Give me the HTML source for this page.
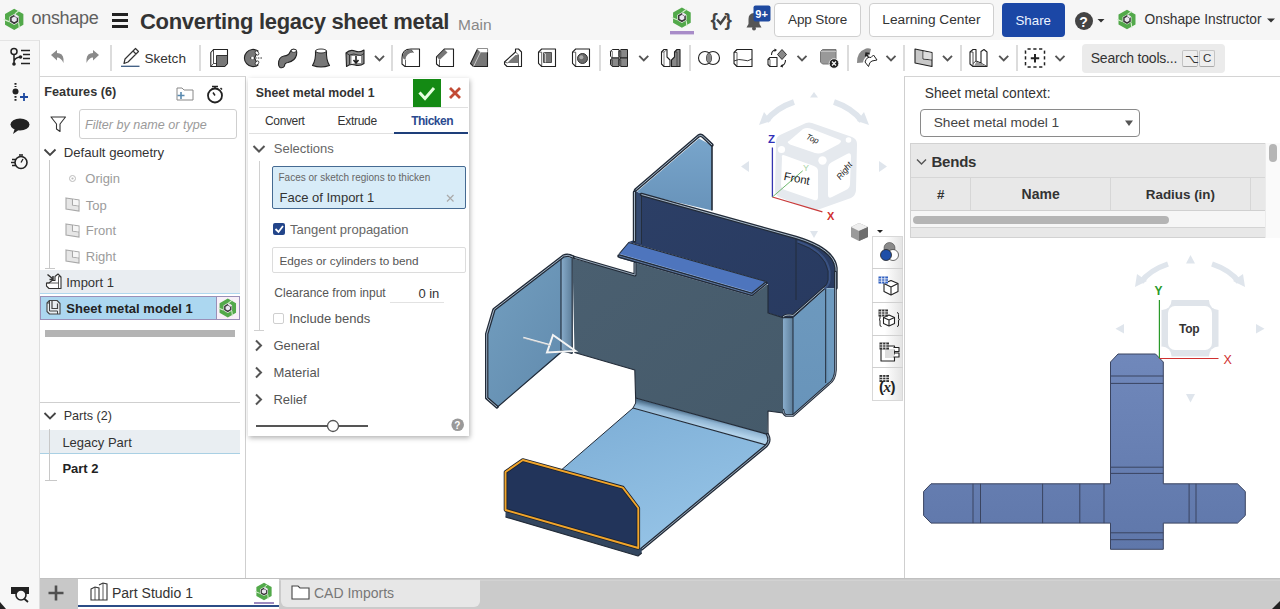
<!DOCTYPE html>
<html><head><meta charset="utf-8">
<style>
*{box-sizing:border-box;margin:0;padding:0}
html,body{width:1280px;height:609px;overflow:hidden;background:#fff;font-family:"Liberation Sans",sans-serif;color:#333}
.a{position:absolute}
svg{position:absolute;overflow:visible}
.t{position:absolute;white-space:nowrap;line-height:1}
</style></head><body>
<div class="a" style="left:0px;top:0px;width:1280px;height:40px;background:#f6f6f6"></div>
<div class="a" style="left:40px;top:40px;width:1240px;height:37px;background:#fff"></div>
<div class="a" style="left:0px;top:40px;width:40px;height:569px;background:#f7f7f7;border-right:1px solid #dedede;border-top:1px solid #e4e4e4"></div>
<div class="a" style="left:40px;top:76px;width:206px;height:502px;background:#fff;border-top:1px solid #d4d4d4;border-right:1px solid #cfcfcf"></div>
<div class="a" style="left:904px;top:76px;width:376px;height:502px;background:#fff;border-top:1px solid #d4d4d4;border-left:1px solid #cfcfcf"></div>
<div class="a" style="left:40px;top:578px;width:1240px;height:31px;background:#cbcbcb;border-top:1px solid #c0c0c0"></div>
<div class="a" style="left:40px;top:580px;width:1240px;height:1px;background:#d2d2d2"></div>
<div class="t" style="left:31.5px;top:9.00px;font-size:18px;font-weight:normal;color:#606060;font-style:normal;letter-spacing:-0.3px;">onshape</div>
<div class="a" style="left:112px;top:13px;width:16px;height:2.5px;background:#222"></div>
<div class="a" style="left:112px;top:19px;width:16px;height:2.5px;background:#222"></div>
<div class="a" style="left:112px;top:25px;width:16px;height:2.5px;background:#222"></div>
<div class="t" style="left:140px;top:11.00px;font-size:22px;font-weight:bold;color:#333;font-style:normal;letter-spacing:-0.3px;">Converting legacy sheet metal</div>
<div class="t" style="left:458px;top:16.52px;font-size:15.5px;font-weight:normal;color:#888;font-style:normal;letter-spacing:0px;">Main</div>
<div class="a" style="left:774px;top:3px;width:87px;height:34px;background:#fff;border:1px solid #cfcfcf;border-radius:4px"></div>
<div class="t" style="left:788px;top:13.42px;font-size:13.5px;font-weight:normal;color:#333;font-style:normal;letter-spacing:-0.1px;">App Store</div>
<div class="a" style="left:869px;top:3px;width:125px;height:34px;background:#fff;border:1px solid #cfcfcf;border-radius:4px"></div>
<div class="t" style="left:882.3px;top:13.25px;font-size:13.7px;font-weight:normal;color:#333;font-style:normal;letter-spacing:0px;">Learning Center</div>
<div class="a" style="left:1002px;top:3px;width:63px;height:34px;background:#1b47a6;border-radius:4px"></div>
<div class="t" style="left:1015.5px;top:13.59px;font-size:13.3px;font-weight:normal;color:#eef3ff;font-style:normal;letter-spacing:0px;">Share</div>
<div class="t" style="left:1144.6px;top:13.21px;font-size:13.75px;font-weight:normal;color:#333;font-style:normal;letter-spacing:0px;">Onshape Instructor</div>
<div class="t" style="left:144.4px;top:51.54px;font-size:13.6px;font-weight:normal;color:#333;font-style:normal;letter-spacing:0px;">Sketch</div>
<div class="a" style="left:110px;top:45px;width:2px;height:26px;background:#dcdcdc"></div>
<div class="a" style="left:199px;top:45px;width:2px;height:26px;background:#dcdcdc"></div>
<div class="a" style="left:391px;top:45px;width:2px;height:26px;background:#dcdcdc"></div>
<div class="a" style="left:599px;top:45px;width:2px;height:26px;background:#dcdcdc"></div>
<div class="a" style="left:689px;top:45px;width:2px;height:26px;background:#dcdcdc"></div>
<div class="a" style="left:847px;top:45px;width:2px;height:26px;background:#dcdcdc"></div>
<div class="a" style="left:903px;top:45px;width:2px;height:26px;background:#dcdcdc"></div>
<div class="a" style="left:960px;top:45px;width:2px;height:26px;background:#dcdcdc"></div>
<div class="a" style="left:1016px;top:45px;width:2px;height:26px;background:#dcdcdc"></div>
<div class="a" style="left:1082px;top:44px;width:143px;height:29px;background:#ebebeb;border-radius:4px"></div>
<div class="t" style="left:1090.7px;top:51.10px;font-size:14px;font-weight:normal;color:#333;font-style:normal;letter-spacing:-0.2px;">Search tools...</div>
<div class="a" style="left:1181.5px;top:50px;width:16px;height:17px;background:#eee;border:1px solid #c4c4c4;border-bottom:1.5px solid #a8a8a8;border-radius:2px"></div>
<div class="a" style="left:1199px;top:50px;width:16px;height:17px;background:#eee;border:1px solid #c4c4c4;border-bottom:1.5px solid #a8a8a8;border-radius:2px"></div>
<div class="t" style="left:1184.5px;top:52.80px;font-size:12px;font-weight:normal;color:#333;font-style:normal;letter-spacing:0px;">&#8997;</div>
<div class="t" style="left:1203px;top:53.23px;font-size:11.5px;font-weight:normal;color:#333;font-style:normal;letter-spacing:0px;">C</div>
<div class="t" style="left:44.3px;top:86.30px;font-size:12.7px;font-weight:bold;color:#333;font-style:normal;letter-spacing:0px;">Features (6)</div>
<div class="a" style="left:79px;top:109px;width:158px;height:30px;background:#fff;border:1px solid #cfcfcf;border-radius:3px"></div>
<div class="t" style="left:85px;top:118.59px;font-size:12.6px;font-weight:normal;color:#9a9a9a;font-style:italic;letter-spacing:0px;">Filter by name or type</div>
<div class="t" style="left:63.7px;top:145.68px;font-size:13.2px;font-weight:normal;color:#333;font-style:normal;letter-spacing:0px;">Default geometry</div>
<div class="t" style="left:85.3px;top:171.85px;font-size:13px;font-weight:normal;color:#9c9c9c;font-style:normal;letter-spacing:0px;">Origin</div>
<div class="t" style="left:85.8px;top:198.55px;font-size:13px;font-weight:normal;color:#9c9c9c;font-style:normal;letter-spacing:0px;">Top</div>
<div class="t" style="left:85.8px;top:224.25px;font-size:13px;font-weight:normal;color:#9c9c9c;font-style:normal;letter-spacing:0px;">Front</div>
<div class="t" style="left:85.8px;top:250.25px;font-size:13px;font-weight:normal;color:#9c9c9c;font-style:normal;letter-spacing:0px;">Right</div>
<div class="a" style="left:49px;top:160px;width:1px;height:109px;background:#c8c8c8"></div>
<div class="a" style="left:45px;top:268px;width:10px;height:1px;background:#c8c8c8"></div>
<div class="a" style="left:40px;top:270px;width:200px;height:24px;background:#e9edf1;border-bottom:1.5px solid #b0d8ee"></div>
<div class="t" style="left:66.2px;top:276.25px;font-size:13px;font-weight:normal;color:#333;font-style:normal;letter-spacing:0px;">Import 1</div>
<div class="a" style="left:40px;top:296px;width:200px;height:24px;background:#acd7f0;border:1.5px solid #9a90b8"></div>
<div class="a" style="left:216px;top:296px;width:24px;height:24px;background:#f8f0f8;border:1.5px solid #9a90b8"></div>
<div class="t" style="left:66.2px;top:301.65px;font-size:13px;font-weight:bold;color:#222;font-style:normal;letter-spacing:0.05px;">Sheet metal model 1</div>
<div class="a" style="left:45px;top:330px;width:190px;height:7px;background:#b4b4b4"></div>
<div class="a" style="left:40px;top:402px;width:200px;height:1px;background:#cfcfcf"></div>
<div class="t" style="left:63.7px;top:410.29px;font-size:12.6px;font-weight:normal;color:#333;font-style:normal;letter-spacing:0px;">Parts (2)</div>
<div class="a" style="left:40px;top:430px;width:200px;height:24px;background:#e9eef2;border-bottom:1px solid #a9d0e4"></div>
<div class="t" style="left:62.4px;top:435.95px;font-size:13px;font-weight:normal;color:#333;font-style:normal;letter-spacing:0px;">Legacy Part</div>
<div class="t" style="left:62.4px;top:461.65px;font-size:13px;font-weight:bold;color:#222;font-style:normal;letter-spacing:0px;">Part 2</div>
<div class="a" style="left:49px;top:429px;width:1px;height:52px;background:#c8c8c8"></div>
<div class="a" style="left:45px;top:480px;width:12px;height:1px;background:#c8c8c8"></div>
<div class="t" style="left:924.7px;top:87.07px;font-size:13.8px;font-weight:normal;color:#333;font-style:normal;letter-spacing:0px;">Sheet metal context:</div>
<div class="a" style="left:920px;top:109px;width:220px;height:28px;background:#fff;border:1px solid #8a8a8a;border-radius:4px"></div>
<div class="t" style="left:933.7px;top:116.26px;font-size:13.7px;font-weight:normal;color:#444;font-style:normal;letter-spacing:0px;">Sheet metal model 1</div>
<div class="a" style="left:910px;top:143px;width:356px;height:95px;background:#e8e8e8;border:1px solid #d2d2d2"></div>
<div class="t" style="left:931.4px;top:154.25px;font-size:15px;font-weight:bold;color:#333;font-style:normal;letter-spacing:-0.2px;">Bends</div>
<div class="a" style="left:911px;top:177px;width:354px;height:1px;background:#d6d6d6"></div>
<div class="a" style="left:911px;top:210px;width:354px;height:1px;background:#d0d0d0"></div>
<div class="a" style="left:970px;top:178px;width:1px;height:32px;background:#d6d6d6"></div>
<div class="a" style="left:1110px;top:178px;width:1px;height:32px;background:#d6d6d6"></div>
<div class="a" style="left:1250px;top:178px;width:1px;height:32px;background:#d6d6d6"></div>
<div class="t" style="left:937px;top:187.81px;font-size:13.4px;font-weight:bold;color:#333;font-style:normal;letter-spacing:0px;">#</div>
<div class="t" style="left:1021.6px;top:187.30px;font-size:14px;font-weight:bold;color:#333;font-style:normal;letter-spacing:0px;">Name</div>
<div class="t" style="left:1145.8px;top:187.81px;font-size:13.4px;font-weight:bold;color:#333;font-style:normal;letter-spacing:0px;">Radius (in)</div>
<div class="a" style="left:911px;top:211px;width:354px;height:16px;background:#f6f6f6"></div>
<div class="a" style="left:913px;top:215.5px;width:256px;height:8.5px;background:#b5b5b5;border-radius:4px"></div>
<div class="a" style="left:911px;top:227px;width:354px;height:1px;background:#d4d4d4"></div>
<div class="a" style="left:1265px;top:143px;width:15px;height:95px;background:#fafafa;border-left:1px solid #ececec"></div>
<div class="a" style="left:1269px;top:144px;width:8px;height:18px;background:#b5b5b5;border-radius:4px"></div>
<div class="a" style="left:40px;top:579px;width:38px;height:30px;background:#c8c8c8"></div>
<div class="a" style="left:78px;top:579px;width:201px;height:30px;background:#fff"></div>
<div class="a" style="left:78px;top:605px;width:201px;height:2px;background:#2b4c86"></div>
<div class="a" style="left:254px;top:602px;width:20px;height:2px;background:#9c8ac0"></div>
<div class="t" style="left:112px;top:586.10px;font-size:14px;font-weight:normal;color:#333;font-style:normal;letter-spacing:0px;">Part Studio 1</div>
<div class="a" style="left:281px;top:580px;width:199px;height:27px;background:#e7e7e7;border-radius:0 0 6px 6px"></div>
<div class="t" style="left:314px;top:586.10px;font-size:14px;font-weight:normal;color:#777;font-style:normal;letter-spacing:0px;">CAD Imports</div>
<div class="a" style="left:248px;top:78px;width:221px;height:358px;background:#fff;box-shadow:1px 2px 5px rgba(0,0,0,0.3)"></div>
<div class="t" style="left:255.8px;top:87.34px;font-size:12.3px;font-weight:bold;color:#333;font-style:normal;letter-spacing:0px;">Sheet metal model 1</div>
<div class="a" style="left:413px;top:79px;width:28px;height:28px;background:#148a14"></div>
<div class="a" style="left:249px;top:107px;width:219px;height:1px;background:#e0e0e0"></div>
<div class="t" style="left:265px;top:114.80px;font-size:12px;font-weight:normal;color:#333;font-style:normal;letter-spacing:-0.35px;">Convert</div>
<div class="t" style="left:337.5px;top:114.80px;font-size:12px;font-weight:normal;color:#333;font-style:normal;letter-spacing:-0.3px;">Extrude</div>
<div class="t" style="left:411.2px;top:114.80px;font-size:12px;font-weight:bold;color:#2b4a8f;font-style:normal;letter-spacing:-0.5px;">Thicken</div>
<div class="a" style="left:249px;top:133px;width:219px;height:1px;background:#e0e0e0"></div>
<div class="a" style="left:394px;top:132px;width:74px;height:2px;background:#1e3f7a"></div>
<div class="t" style="left:273.8px;top:141.55px;font-size:13px;font-weight:normal;color:#666;font-style:normal;letter-spacing:0px;">Selections</div>
<div class="a" style="left:259px;top:161px;width:1px;height:169px;background:#d0d0d0"></div>
<div class="a" style="left:254px;top:330px;width:10px;height:1px;background:#d0d0d0"></div>
<div class="a" style="left:272px;top:166px;width:194px;height:43px;background:#d8ecf8;border:1px solid #456a92;border-radius:2px"></div>
<div class="t" style="left:278.5px;top:172.80px;font-size:10px;font-weight:normal;color:#666;font-style:normal;letter-spacing:0px;">Faces or sketch regions to thicken</div>
<div class="t" style="left:279.5px;top:191.35px;font-size:13px;font-weight:normal;color:#333;font-style:normal;letter-spacing:0px;">Face of Import 1</div>
<div class="a" style="left:273px;top:223px;width:12px;height:12px;background:#23458a;border-radius:2px"></div>
<div class="t" style="left:290px;top:222.85px;font-size:13px;font-weight:normal;color:#666;font-style:normal;letter-spacing:0px;">Tangent propagation</div>
<div class="a" style="left:272px;top:247px;width:194px;height:26px;background:#fff;border:1px solid #dcdcdc;border-radius:2px"></div>
<div class="t" style="left:279.5px;top:255.41px;font-size:11.75px;font-weight:normal;color:#555;font-style:normal;letter-spacing:0px;">Edges or cylinders to bend</div>
<div class="t" style="left:274.3px;top:287.30px;font-size:12px;font-weight:normal;color:#555;font-style:normal;letter-spacing:0px;">Clearance from input</div>
<div class="t" style="left:418.4px;top:286.95px;font-size:13px;font-weight:normal;color:#333;font-style:normal;letter-spacing:0px;">0 in</div>
<div class="a" style="left:390px;top:302px;width:54px;height:1px;background:#e2e2e2"></div>
<div class="a" style="left:273px;top:313px;width:11px;height:11px;background:#fff;border:1px solid #cfcfcf;border-radius:2px"></div>
<div class="t" style="left:289.2px;top:312.15px;font-size:13px;font-weight:normal;color:#555;font-style:normal;letter-spacing:0px;">Include bends</div>
<div class="t" style="left:273.4px;top:339.25px;font-size:13px;font-weight:normal;color:#555;font-style:normal;letter-spacing:0px;">General</div>
<div class="t" style="left:273.4px;top:366.35px;font-size:13px;font-weight:normal;color:#555;font-style:normal;letter-spacing:0px;">Material</div>
<div class="t" style="left:273.4px;top:393.15px;font-size:13px;font-weight:normal;color:#555;font-style:normal;letter-spacing:0px;">Relief</div>
<div class="a" style="left:256px;top:425px;width:112px;height:1.5px;background:#555"></div>
<svg style="left:0px;top:0px;" width="1280" height="609" viewBox="0 0 1280 609">
<defs>
<linearGradient id="gLF" x1="0" y1="0" x2="1" y2="1"><stop offset="0" stop-color="#739fc0"/><stop offset="1" stop-color="#6089ac"/></linearGradient>
<linearGradient id="gBend" x1="0" y1="0" x2="1" y2="0"><stop offset="0" stop-color="#88accb"/><stop offset="1" stop-color="#5d7e9a"/></linearGradient>
<linearGradient id="gFloor" x1="0" y1="0" x2="0.5" y2="1"><stop offset="0" stop-color="#7cadd5"/><stop offset="1" stop-color="#95c3e6"/></linearGradient>
<linearGradient id="gRW" x1="0" y1="0" x2="0" y2="1"><stop offset="0" stop-color="#6d99be"/><stop offset="1" stop-color="#6894ba"/></linearGradient>
<linearGradient id="gBF" x1="0" y1="0" x2="0" y2="1"><stop offset="0" stop-color="#78a5cb"/><stop offset="1" stop-color="#6893ba"/></linearGradient>
<linearGradient id="gMW" x1="0" y1="0" x2="1" y2="1"><stop offset="0" stop-color="#4a5f70"/><stop offset="1" stop-color="#455a6a"/></linearGradient>
<linearGradient id="gNavy" x1="0" y1="0" x2="1" y2="1"><stop offset="0" stop-color="#2c3f66"/><stop offset="1" stop-color="#283a60"/></linearGradient>
</defs>
<path d="M637 191.5 L699 138.5 L712 145.5 L712 210.5 L641.5 194 Z" fill="url(#gBF)"/><path d="M712 145.5 L712 210.5" fill="none" stroke="#222b38" stroke-width="1.6" stroke-linejoin="round"/><path d="M635.5 190 L698.5 136 Q701 134.5 703 136.5 L712 145" fill="none" stroke="#222b38" stroke-width="3.4" stroke-linejoin="round" stroke-linecap="round"/><path d="M635.5 190 L698.5 136 Q701 134.5 703 136.5 L712 145" fill="none" stroke="#b4c6d8" stroke-width="0.9" stroke-linejoin="round"/><path d="M634.5 190 Q636 192 641.5 194 L796 237.5 Q834 250 835 268 L835 288 L826 288 L793 317.6 L783 317.6 L768 313 L768 285 L765.7 281.5 L628.5 242 L634.5 240 Z" fill="url(#gNavy)"/><path d="M634.5 190 Q636 192 641.5 194 L641.5 244 L634.5 242 Z" fill="#34496f"/><path d="M641.5 194 L641.5 244" fill="none" stroke="#222b38" stroke-width="0.9" stroke-linejoin="round"/><path d="M796 238 L796 300" fill="none" stroke="#222b38" stroke-width="0.9" stroke-linejoin="round"/><path d="M634.5 192 L634.5 241" fill="none" stroke="#222b38" stroke-width="3.4" stroke-linejoin="round" stroke-linecap="round"/><path d="M634.5 192 L634.5 241" fill="none" stroke="#b4c6d8" stroke-width="0.9" stroke-linejoin="round"/><path d="M641.5 194.5 L796 237.5 Q834 249 836 268 L836 288" fill="none" stroke="#222b38" stroke-width="3.4" stroke-linejoin="round" stroke-linecap="round"/><path d="M641.5 194.5 L796 237.5 Q834 249 836 268 L836 288" fill="none" stroke="#b4c6d8" stroke-width="0.9" stroke-linejoin="round"/><path d="M783 317.6 L793 317.6 L825.7 288.5 L835.5 288.5 L835.5 370 Q835 380 828.7 383 L793 415 L786 415 Q783 414 783 410 Z" fill="url(#gRW)"/><path d="M783 317.6 L793 317.6 L793 415 L786 415 Q783 414 783 410 Z" fill="url(#gBend)"/><path d="M825.7 288.5 L835.5 288.5 L835.5 370 Q835 380 828.7 383 Z" fill="#6f9bc0"/><path d="M793 317.6 L793 415 M825.7 288 L825.7 383 M793 317.6 L825.7 288" fill="none" stroke="#222b38" stroke-width="1" stroke-linejoin="round"/><path d="M783 317.6 L793 317.6" fill="none" stroke="#222b38" stroke-width="1.2" stroke-linejoin="round"/><path d="M783 317 Q786 314 793 315.5 L825.7 286.5" fill="none" stroke="#222b38" stroke-width="2.6" stroke-linejoin="round" stroke-linecap="round"/><path d="M783 317 Q786 314 793 315.5 L825.7 286.5" fill="none" stroke="#c8d8e8" stroke-width="0.8" stroke-linejoin="round"/><path d="M835.5 272 L835.5 370 Q835 380 828.7 384 L793 415.5 L786 415.5 Q783 414 783 410" fill="none" stroke="#222b38" stroke-width="2.6" stroke-linejoin="round" stroke-linecap="round"/><path d="M835.5 272 L835.5 370 Q835 380 828.7 384 L793 415.5 L786 415.5 Q783 414 783 410" fill="none" stroke="#b4c6d8" stroke-width="0.7" stroke-linejoin="round"/><path d="M797.5 241.5 Q826 251 829.5 271 L829.5 280 Q829 285 824.5 289" fill="none" stroke="#3a5282" stroke-width="2"/><path d="M797.5 243 Q824.5 252 828 271 L828 280 Q827.5 284 823.5 288" fill="none" stroke="#222b38" stroke-width="0.8" stroke-linejoin="round"/><path d="M572.5 258.5 L634.6 274.5 L634.6 262.4 L752 296.3 L766.5 285 L768 285 L768 313 L783 317.6 L783 413 L768 411 L767.5 434.4 L635.6 398 L634.8 370 L574.5 352.5 Z" fill="url(#gMW)"/><path d="M768 285 L768 313 L783 317.6 M783 413 L768 411 L768 434" fill="none" stroke="#222b38" stroke-width="1.1" stroke-linejoin="round"/><path d="M635.6 398 L634.8 370 L574.5 352.5" fill="none" stroke="#222b38" stroke-width="1.1" stroke-linejoin="round"/><path d="M573 257 L635 275 L635 263" fill="none" stroke="#222b38" stroke-width="3" stroke-linejoin="round" stroke-linecap="round"/><path d="M573 257 L635 275 L635 263" fill="none" stroke="#b4c6d8" stroke-width="0.8" stroke-linejoin="round"/><path d="M619 254 L628.7 242.5 L765.7 281.5 L752 292.4 Z" fill="#4e75bd"/><path d="M619 254 L752 292.4 L752 296.3 L619 258 Z" fill="#2e3f5e"/><path d="M619 254 L628.7 242.5 L765.7 281.5" fill="none" stroke="#222b38" stroke-width="1.1" stroke-linejoin="round"/><path d="M619 254 L752 292.4" fill="none" stroke="#8fb0e0" stroke-width="0.8" stroke-linejoin="round"/><path d="M619 256 L752 294.4 L766 283" fill="none" stroke="#222b38" stroke-width="3.4" stroke-linejoin="round" stroke-linecap="round"/><path d="M619 256 L752 294.4 L766 283" fill="none" stroke="#6f8fc0" stroke-width="0.8" stroke-linejoin="round"/><path d="M563.8 256.1 L494 308.7 L485.6 334 L485.6 398 L497 407.5 L562.4 352 L572.5 353.4 L572.5 258.5 Z" fill="url(#gLF)"/><path d="M561 258.4 L572.2 258.4 L572.2 353.4 L561 351 Z" fill="url(#gBend)"/><path d="M561 258.4 L561 351 M572.2 258.4 L572.2 353.4" fill="none" stroke="#222b38" stroke-width="1.1" stroke-linejoin="round"/><path d="M497 407.5 L562.4 351 L572.2 353.4" fill="none" stroke="#222b38" stroke-width="1.1" stroke-linejoin="round"/><path d="M573 257 Q568 254 563.5 256 L494 309.5 L486.7 334 L486.7 398 L497 407" fill="none" stroke="#222b38" stroke-width="3.4" stroke-linejoin="round" stroke-linecap="round"/><path d="M573 257 Q568 254 563.5 256 L494 309.5 L486.7 334 L486.7 398 L497 407" fill="none" stroke="#b4c6d8" stroke-width="0.9" stroke-linejoin="round"/><defs><linearGradient id="gFB" gradientUnits="userSpaceOnUse" x1="702" y1="415" x2="699.5" y2="426"><stop offset="0" stop-color="#4f708c"/><stop offset="0.45" stop-color="#8fb4d2"/><stop offset="1" stop-color="#b2d2ea"/></linearGradient></defs><path d="M560.7 470.5 L633 408 L766 445 L641.7 548 L638.3 548 L638.3 508 L622.8 487.6 Z" fill="url(#gFloor)"/><path d="M635.6 398 L767.5 434.4 Q770.5 440 766 445 L633 408 Q637 403 635.6 398 Z" fill="url(#gFB)"/><path d="M635.6 398 L767.5 434.4" fill="none" stroke="#222b38" stroke-width="1.1" stroke-linejoin="round"/><path d="M633 408 L766 445" fill="none" stroke="#222b38" stroke-width="1.1" stroke-linejoin="round"/><path d="M560.7 470.5 L633 408 Q637 403 635.6 398" fill="none" stroke="#222b38" stroke-width="1" stroke-linejoin="round"/><path d="M767.5 434.4 Q771 441 766 446 L641.7 549" fill="none" stroke="#222b38" stroke-width="3.2" stroke-linejoin="round" stroke-linecap="round"/><path d="M767.5 434.4 Q771 441 766 446 L641.7 549" fill="none" stroke="#b4c6d8" stroke-width="0.8" stroke-linejoin="round"/><path d="M505.5 510 L638.3 548 L641.7 548 L641.7 553 L638 556 L505.5 517 Z" fill="#33465f"/><path d="M505.5 517 L638 556 L641.7 553" fill="none" stroke="#222b38" stroke-width="1.2" stroke-linejoin="round"/><path d="M505.5 472 L522.8 460 L622.8 487.6 L638.3 508 L638.3 548 L505.5 510 Z" fill="#22345a"/><path d="M505.5 472 L522.8 460 L622.8 487.6 L638.3 508 L638.3 548 L505.5 510 Z" fill="none" stroke="#1a2230" stroke-width="3.6" stroke-linejoin="round"/><path d="M505.5 472 L522.8 460 L622.8 487.6 L638.3 508 L638.3 548 L505.5 510 Z" fill="none" stroke="#f2a52a" stroke-width="1.9" stroke-linejoin="round"/><line x1="523.3" y1="337.5" x2="550.5" y2="345" stroke="#f4f4f4" stroke-width="1.8"/><path d="M553 335 L575.5 351 L547 352.5 Z" fill="none" stroke="#f4f4f4" stroke-width="2"/><line x1="523.3" y1="338" x2="552" y2="346" stroke="#999" stroke-width="0.4"/></svg>
<svg style="left:0px;top:0px;" width="1280" height="609" viewBox="0 0 1280 609">
<g fill="#dfe5ec" stroke="none">
<path d="M810 91.5 L818 91.5 L814 86 Z" transform="translate(0,6)"/>
<path d="M810 231 L818 231 L814 238 Z"/>
<path d="M741 166.4 L749 161 L749 172 Z"/>
<path d="M887 166.4 L879 161 L879 172 Z"/>
</g>
<g fill="none" stroke="#dfe5ec" stroke-width="6">
<path d="M766 121 Q776 108 794 102"/>
<path d="M834 102 Q852 108 862 121"/>
</g>
<g fill="#dfe5ec">
<path d="M759 125 L764 112 L771 121 Z"/>
<path d="M869 125 L864 112 L857 121 Z"/>
</g>
<!-- cube frame -->
<path d="M806 123 Q809 122 812 123 L852 137 Q857 139 857 144 L856 190 Q856 195 851 198 L820 209 Q815 211 810 209 L779 197 Q775 195 775 190 L776 142 Q776 137 780 135 Z" fill="#e5e9ee"/>
<path d="M789 141 Q786 142 790 144.5 L815 153 Q819 154 823 152.5 L839 144 Q843 141 839 139.5 L812 129 Q807 127 803 129 Z" fill="#fff"/>
<path d="M782 158 Q781 154 785 155.5 L814 166 Q818 167.5 818 171 L818 197 Q818 201 814 200 L785 190 Q781 188.5 781 185 Z" fill="#fff"/>
<path d="M828 168 Q828 164 832 162 L847 154 Q851 152 851 156 L850 184 Q850 188 846 190 L832 197 Q828 199 828 195 Z" fill="#fff"/>
<circle cx="781.5" cy="149.5" r="3.6" fill="#fff"/>
<circle cx="822.5" cy="160.5" r="4.2" fill="#fff"/>
<circle cx="848.5" cy="140" r="2.8" fill="#fff"/>
<line x1="772.4" y1="197" x2="772.4" y2="147.5" stroke="#3535b0" stroke-width="1.3"/>
<line x1="772.4" y1="197" x2="822.4" y2="211.8" stroke="#c83a3a" stroke-width="1.3"/>
<line x1="772.4" y1="197" x2="802.7" y2="170.8" stroke="#70b870" stroke-width="1"/>
</svg>
<div class="t" style="left:768px;top:133.72px;font-size:11.5px;font-weight:bold;color:#3030b8;font-style:normal;letter-spacing:0px;">Z</div>
<div class="t" style="left:827px;top:211.15px;font-size:11px;font-weight:bold;color:#d03030;font-style:normal;letter-spacing:0px;">X</div>
<div class="t" style="left:803px;top:163.85px;font-size:9px;font-weight:normal;color:#a8d4a8;font-style:normal;letter-spacing:0px;">Y</div>
<div class="t" style="left:784.5px;top:170.72px;font-size:11.5px;font-weight:normal;color:#1a1a1a;font-style:normal;letter-spacing:-0.2px;transform:rotate(11deg);transform-origin:0 0;">Front</div>
<div class="t" style="left:808px;top:132.70px;font-size:8px;font-weight:normal;color:#222;font-style:italic;letter-spacing:0px;transform:rotate(25deg);transform-origin:0 0;">Top</div>
<div class="t" style="left:835px;top:176.28px;font-size:8.5px;font-weight:normal;color:#1a1a1a;font-style:italic;letter-spacing:0px;transform:rotate(-52deg);transform-origin:0 0;">Right</div>
<div class="a" style="left:872px;top:236px;width:31px;height:165px;background:linear-gradient(90deg,#fff 40%,#e4e4e4);border:1px solid #d8d8d8"></div>
<div class="a" style="left:872px;top:268px;width:31px;height:1px;background:#d0d0d0"></div>
<div class="a" style="left:872px;top:301.5px;width:31px;height:1px;background:#d0d0d0"></div>
<div class="a" style="left:872px;top:335px;width:31px;height:1px;background:#d0d0d0"></div>
<div class="a" style="left:872px;top:367px;width:31px;height:1px;background:#d0d0d0"></div>
<svg style="left:0px;top:0px;" width="1280" height="609" viewBox="0 0 1280 609">
<path d="M851 227 L859 223 L868 227 L868 237 L859 241 L851 237 Z" fill="#9a9a9a"/>
<path d="M851 227 L859 231 L868 227 L859 223 Z" fill="#eee"/>
<path d="M859 231 L868 227 L868 237 L859 241 Z" fill="#6e6e6e"/>
<path d="M877 230 L883 230 L880 233 Z" fill="#222"/>
<circle cx="889.5" cy="248" r="5.5" fill="#8a8a8a" stroke="#444" stroke-width="0.6"/>
<circle cx="893" cy="255" r="5.5" fill="#fff" stroke="#444" stroke-width="0.8"/>
<circle cx="886" cy="255" r="5.5" fill="#1f4fa8" stroke="#222" stroke-width="0.8"/>
<g fill="#fff" stroke="#222" stroke-width="1.1" stroke-linejoin="round">
<path d="M884 283.5 L891 280.5 L898 283.5 L898 291.5 L891 295 L884 291.5 Z"/>
<path d="M884 283.5 L891 287 L898 283.5 M891 287 L891 295" fill="none"/>
<path d="M883.5 317.5 L889 315 L894.5 317.5 L894.5 323.5 L889 326 L883.5 323.5 Z"/>
<path d="M883.5 317.5 L889 320 L894.5 317.5 M889 320 L889 326" fill="none"/>
<path d="M881.5 312.5 Q880 312.5 880 314.5 L880 318 Q880 319.5 879 319.5 Q880 319.5 880 321 L880 325 Q880 326.5 881.5 326.5 M897 312.5 Q898.5 312.5 898.5 314.5 L898.5 318 Q898.5 319.5 899.5 319.5 Q898.5 319.5 898.5 321 L898.5 325 Q898.5 326.5 897 326.5" fill="none" stroke-width="1"/>
<path d="M881 346 L894.5 346 L894.5 361 L881 361 Z"/>
<path d="M885 349 L894 349 L894 358 L885 358 Z" fill="#ddd" stroke="none"/>
<path d="M893.5 347.5 L899 347.5 L899 351.5 L895 351.5 M895 353 L899 353 L899 357 L893.5 357" fill="#fff"/>
</g>
<rect x="878.5" y="276.5" width="9.5" height="7" fill="#2f5fc0"/><path d="M878.5 278.83 H888.0 M878.5 281.17 H888.0 M881.67 276.5 V283.5 M884.83 276.5 V283.5" stroke="#fff" stroke-width="0.8"/><rect x="878.5" y="309.5" width="9.5" height="7" fill="#333"/><path d="M878.5 311.83 H888.0 M878.5 314.17 H888.0 M881.67 309.5 V316.5 M884.83 309.5 V316.5" stroke="#fff" stroke-width="0.8"/><rect x="879.5" y="342.5" width="9.5" height="7" fill="#333"/><path d="M879.5 344.83 H889.0 M879.5 347.17 H889.0 M882.67 342.5 V349.5 M885.83 342.5 V349.5" stroke="#fff" stroke-width="0.8"/><rect x="879.5" y="375" width="9.5" height="7" fill="#333"/><path d="M879.5 377.33 H889.0 M879.5 379.67 H889.0 M882.67 375 V382 M885.83 375 V382" stroke="#fff" stroke-width="0.8"/>
</svg>
<div class="t" style="left:879px;top:378.75px;font-size:15px;font-weight:bold;color:#222;font-style:normal;letter-spacing:-0.5px;">(<span style="font-family:Liberation Serif;font-style:italic">x</span>)</div>
<svg style="left:0px;top:0px;" width="1280" height="609" viewBox="0 0 1280 609">
<defs><linearGradient id="gFP" x1="0" y1="0" x2="0" y2="1"><stop offset="0" stop-color="#7088bb"/><stop offset="1" stop-color="#5f77aa"/></linearGradient></defs>
<g fill="#dfe5ec">
<path d="M1186 263.5 L1195 263.5 L1190.5 255 Z"/>
<path d="M1186 394 L1195 394 L1190.5 402.5 Z"/>
<path d="M1124 324 L1124 333.5 L1115.5 328.7 Z"/>
<path d="M1256 324 L1256 333.5 L1264.5 328.7 Z"/>
</g>
<g fill="none" stroke="#dfe5ec" stroke-width="5.5">
<path d="M1141 282 Q1150 270 1168 264"/>
<path d="M1212 264 Q1230 270 1239 282"/>
</g>
<g fill="#dfe5ec">
<path d="M1135 287 L1137 274 L1147 281 Z"/>
<path d="M1245 287 L1243 274 L1233 281 Z"/>
</g>
<rect x="1161.5" y="300" width="57" height="56.5" fill="#dfe4ea"/>
<circle cx="1162" cy="300.5" r="9.5" fill="#fff"/><circle cx="1218.5" cy="300.5" r="9.5" fill="#fff"/><circle cx="1162" cy="356" r="9.5" fill="#fff"/><circle cx="1218.5" cy="356" r="9.5" fill="#fff"/>
<rect x="1168" y="306" width="44" height="44" rx="7" fill="#fff"/>
<path d="M1118 354 L1155.5 354 L1163.3 362 L1163.3 483.8 L1237.5 483.8 L1245.3 491.5 L1245.3 515.5 L1237.5 523.1 L1163.3 523.1 L1163.3 549.3 L1110.5 549.3 L1110.5 523.1 L931 523.1 L923.6 515.5 L923.6 491.5 L931 483.8 L1110.5 483.8 L1110.5 362 Z" fill="url(#gFP)" stroke="#3a4460" stroke-width="1"/>
<g stroke="#3a4460" stroke-width="1">
<path d="M1110.5 376 H1163.3 M1110.5 383.4 H1163.3 M1110.5 467.2 H1163.3 M1110.5 473.4 H1163.3 M1110.5 532.8 H1163.3 M1110.5 539.7 H1163.3"/>
<path d="M973 483.8 V523.1 M980.5 483.8 V523.1 M1042.6 483.8 V523.1 M1079.8 483.8 V523.1 M1104 483.8 V523.1 M1189.1 483.8 V523.1 M1196 483.8 V523.1"/>
</g>
<line x1="1159.4" y1="300" x2="1159.4" y2="358.5" stroke="#2a9a2a" stroke-width="1.2"/>
<line x1="1159.4" y1="358.5" x2="1218.5" y2="358.5" stroke="#d03030" stroke-width="1.2"/>
</svg>
<div class="t" style="left:1154.5px;top:285.30px;font-size:12px;font-weight:bold;color:#2a9a2a;font-style:normal;letter-spacing:0px;">Y</div>
<div class="t" style="left:1223.5px;top:354.38px;font-size:12.5px;font-weight:normal;color:#d03030;font-style:normal;letter-spacing:0px;">X</div>
<div class="t" style="left:1179px;top:322.80px;font-size:12px;font-weight:bold;color:#333;font-style:normal;letter-spacing:-0.2px;">Top</div>
<svg style="left:0px;top:0px;" width="1280" height="609" viewBox="0 0 1280 609"><path d="M14.20 8.80 L23.38 14.10 L23.38 24.70 L14.20 30.00 L5.02 24.70 L5.02 14.10 Z M14.20 13.89 L18.97 16.64 L18.97 22.16 L14.20 24.91 L9.43 22.16 L9.43 16.64 Z" fill="#52a94a" fill-rule="evenodd"/><line x1="14.84" y1="13.89" x2="19.50" y2="10.28" stroke="#d6efcf" stroke-width="1.17" transform="rotate(0 14.2 19.4)"/><line x1="14.84" y1="13.89" x2="19.50" y2="10.28" stroke="#d6efcf" stroke-width="1.17" transform="rotate(120 14.2 19.4)"/><line x1="14.84" y1="13.89" x2="19.50" y2="10.28" stroke="#d6efcf" stroke-width="1.17" transform="rotate(240 14.2 19.4)"/><path d="M14.20 15.58 L17.50 17.49 L17.50 21.31 L14.20 23.22 L10.90 21.31 L10.90 17.49 Z" fill="#ebe6f1" stroke="#3a3a3a" stroke-width="1.59"/><line x1="14.73" y1="14.95" x2="18.02" y2="17.07" stroke="#ebe6f1" stroke-width="2.12"/><path d="M681.90 7.40 L690.73 12.50 L690.73 22.70 L681.90 27.80 L673.07 22.70 L673.07 12.50 Z M681.90 12.30 L686.49 14.95 L686.49 20.25 L681.90 22.90 L677.31 20.25 L677.31 14.95 Z" fill="#52a94a" fill-rule="evenodd"/><line x1="682.51" y1="12.30" x2="687.00" y2="8.83" stroke="#d6efcf" stroke-width="1.12" transform="rotate(0 681.9 17.6)"/><line x1="682.51" y1="12.30" x2="687.00" y2="8.83" stroke="#d6efcf" stroke-width="1.12" transform="rotate(120 681.9 17.6)"/><line x1="682.51" y1="12.30" x2="687.00" y2="8.83" stroke="#d6efcf" stroke-width="1.12" transform="rotate(240 681.9 17.6)"/><path d="M681.90 13.93 L685.08 15.76 L685.08 19.44 L681.90 21.27 L678.72 19.44 L678.72 15.76 Z" fill="#ebe6f1" stroke="#3a3a3a" stroke-width="1.53"/><line x1="682.41" y1="13.32" x2="685.57" y2="15.36" stroke="#ebe6f1" stroke-width="2.04"/><path d="M1127.00 9.70 L1135.49 14.60 L1135.49 24.40 L1127.00 29.30 L1118.51 24.40 L1118.51 14.60 Z M1127.00 14.40 L1131.41 16.95 L1131.41 22.05 L1127.00 24.60 L1122.59 22.05 L1122.59 16.95 Z" fill="#52a94a" fill-rule="evenodd"/><line x1="1127.59" y1="14.40" x2="1131.90" y2="11.07" stroke="#d6efcf" stroke-width="1.08" transform="rotate(0 1127 19.5)"/><line x1="1127.59" y1="14.40" x2="1131.90" y2="11.07" stroke="#d6efcf" stroke-width="1.08" transform="rotate(120 1127 19.5)"/><line x1="1127.59" y1="14.40" x2="1131.90" y2="11.07" stroke="#d6efcf" stroke-width="1.08" transform="rotate(240 1127 19.5)"/><path d="M1127.00 15.97 L1130.06 17.74 L1130.06 21.26 L1127.00 23.03 L1123.94 21.26 L1123.94 17.74 Z" fill="#ebe6f1" stroke="#3a3a3a" stroke-width="1.47"/><line x1="1127.49" y1="15.38" x2="1130.53" y2="17.34" stroke="#ebe6f1" stroke-width="1.96"/><path d="M227.80 298.50 L236.03 303.25 L236.03 312.75 L227.80 317.50 L219.57 312.75 L219.57 303.25 Z M227.80 303.06 L232.08 305.53 L232.08 310.47 L227.80 312.94 L223.52 310.47 L223.52 305.53 Z" fill="#52a94a" fill-rule="evenodd"/><line x1="228.37" y1="303.06" x2="232.55" y2="299.83" stroke="#d6efcf" stroke-width="1.04" transform="rotate(0 227.8 308)"/><line x1="228.37" y1="303.06" x2="232.55" y2="299.83" stroke="#d6efcf" stroke-width="1.04" transform="rotate(120 227.8 308)"/><line x1="228.37" y1="303.06" x2="232.55" y2="299.83" stroke="#d6efcf" stroke-width="1.04" transform="rotate(240 227.8 308)"/><path d="M227.80 304.58 L230.76 306.29 L230.76 309.71 L227.80 311.42 L224.84 309.71 L224.84 306.29 Z" fill="#ebe6f1" stroke="#3a3a3a" stroke-width="1.43"/><line x1="228.28" y1="304.01" x2="231.22" y2="305.91" stroke="#ebe6f1" stroke-width="1.90"/><path d="M264.00 582.70 L271.62 587.10 L271.62 595.90 L264.00 600.30 L256.38 595.90 L256.38 587.10 Z M264.00 586.92 L267.96 589.21 L267.96 593.79 L264.00 596.08 L260.04 593.79 L260.04 589.21 Z" fill="#52a94a" fill-rule="evenodd"/><line x1="264.53" y1="586.92" x2="268.40" y2="583.93" stroke="#d6efcf" stroke-width="0.97" transform="rotate(0 264 591.5)"/><line x1="264.53" y1="586.92" x2="268.40" y2="583.93" stroke="#d6efcf" stroke-width="0.97" transform="rotate(120 264 591.5)"/><line x1="264.53" y1="586.92" x2="268.40" y2="583.93" stroke="#d6efcf" stroke-width="0.97" transform="rotate(240 264 591.5)"/><path d="M264.00 588.33 L266.74 589.92 L266.74 593.08 L264.00 594.67 L261.26 593.08 L261.26 589.92 Z" fill="#ebe6f1" stroke="#3a3a3a" stroke-width="1.32"/><line x1="264.44" y1="587.80" x2="267.17" y2="589.56" stroke="#ebe6f1" stroke-width="1.76"/><rect x="670" y="31" width="24" height="3.4" fill="#a88cc8"/><text x="710.5" y="26" font-family="Liberation Sans" font-weight="bold" font-size="19" fill="#444">{</text><text x="724.5" y="26" font-family="Liberation Sans" font-weight="bold" font-size="19" fill="#444">}</text><path d="M717 19.5 L720.5 23.5 L726 16" fill="none" stroke="#444" stroke-width="2.4"/><path d="M746.5 27.5 L748.5 24 L748.5 19 Q748.5 13.5 754 13 Q759.5 13.5 759.5 19 L759.5 24 L761.5 27.5 Z" fill="#555"/><circle cx="754" cy="28.5" r="2" fill="#555"/><rect x="753.5" y="5.5" width="17" height="16" rx="2" fill="#1f4aa0"/><text x="755.3" y="17.5" font-family="Liberation Sans" font-weight="bold" font-size="11" fill="#fff">9+</text><circle cx="1084" cy="21" r="9" fill="#444"/><text x="1079.3" y="26.5" font-family="Liberation Sans" font-weight="bold" font-size="14" fill="#fff">?</text><path d="M1097.5 19 L1104.5 19 L1101 22.5 Z" fill="#333"/><path d="M1267 18.5 L1275 18.5 L1271 22.5 Z" fill="#333"/><path d="M51 55 L57 50 L57 53 Q63 53 63.5 59 L63.5 63 Q61 57.5 57 57.5 L57 60.5 Z" fill="#8a8a8a"/><path d="M99 55 L93 50 L93 53 Q87 53 86.5 59 L86.5 63 Q89 57.5 93 57.5 L93 60.5 Z" fill="#8a8a8a"/><path d="M124 63.5 L125 59 L135.5 48.5 L138.5 51.5 L128 62 Z M133 51 L136 54" fill="none" stroke="#333" stroke-width="1.2" stroke-linejoin="round"/><line x1="121" y1="66.3" x2="139.5" y2="66.3" stroke="#3a5a80" stroke-width="1.3"/><path d="M210.8 52.5 L213.5 49.5 L227.5 49.5 L227.5 63.5 L224.5 66.5 L210.8 66.5 Z" fill="#fff" stroke="#222" stroke-width="1.1" stroke-linejoin="round"/><path d="M213.5 49.5 L213.5 63.5 L227.5 63.5 M210.8 66.5 L213.5 63.5" fill="none" stroke="#222" stroke-width="0.8"/><path d="M216.5 55.5 L227.5 55.5 L227.5 63.5 L224.5 66.5 L216.5 66.5 Z" fill="#777" stroke="#222" stroke-width="0.9"/><path d="M258 51 A8.6 8.6 0 1 0 258 65 L254.5 58 Z" fill="#777" stroke="#222" stroke-width="1.1" stroke-linejoin="round"/><ellipse cx="257" cy="53" rx="1.5" ry="2.4" transform="rotate(-35 257 53)" fill="#fff" stroke="#222" stroke-width="0.7"/><ellipse cx="257" cy="63" rx="1.5" ry="2.4" transform="rotate(35 257 63)" fill="#fff" stroke="#222" stroke-width="0.7"/><path d="M250 58 H262.5" stroke="#222" stroke-width="0.9" stroke-dasharray="1.6 1"/><circle cx="252.5" cy="58" r="1.3" fill="#fff"/><path d="M278.5 64 Q278.5 57 284 56 Q289 55.5 290 52 L291 50.5 Q293 48.5 296 50 Q297.5 52 296.5 55 Q295 61 288 62.5 Q284.5 63 284.5 66 Q283 68.5 280 67.5 Q278.5 66.5 278.5 64 Z" fill="#777" stroke="#222" stroke-width="1.1" stroke-linejoin="round"/><ellipse cx="293.8" cy="50.8" rx="2.6" ry="1.6" fill="#fff" stroke="#222" stroke-width="0.8"/><path d="M315.5 51 Q316 60 312.5 65.5 Q321 68.5 329.5 65.5 Q326 60 326.5 51 Z" fill="#777" stroke="#222" stroke-width="1.1" stroke-linejoin="round"/><ellipse cx="321" cy="51" rx="5.5" ry="2" fill="#fff" stroke="#222" stroke-width="0.9"/><path d="M346 53 Q350 49 355 51 Q360 53 364 50 L364 63.5 Q360 66.5 355 65 Q350 63.5 346.5 66.5 Z" fill="#8a8a8a" stroke="#222" stroke-width="1.1" stroke-linejoin="round"/><path d="M346 53 L349.5 55 Q354 53 358 55 Q361 56.5 364 53.5" fill="none" stroke="#222" stroke-width="0.8"/><path d="M349.5 55 L349.5 64.5" stroke="#222" stroke-width="0.8"/><path d="M351.5 56 L361 56 L361 63 Q356 62.5 351.5 64 Z" fill="#fff"/><path d="M356 56 V62.5 M353.5 60 L356 63 L358.5 60" fill="none" stroke="#222" stroke-width="1.6"/><path d="M375.0 55.8 L379.5 60.3 L384.0 55.8" fill="none" stroke="#555" stroke-width="1.9"/><path d="M639.25 55.8 L643.75 60.3 L648.25 55.8" fill="none" stroke="#555" stroke-width="1.9"/><path d="M797.5 55.8 L802 60.3 L806.5 55.8" fill="none" stroke="#555" stroke-width="1.9"/><path d="M886.5 55.8 L891 60.3 L895.5 55.8" fill="none" stroke="#555" stroke-width="1.9"/><path d="M943.0 55.8 L947.5 60.3 L952.0 55.8" fill="none" stroke="#555" stroke-width="1.9"/><path d="M999.2 55.8 L1003.7 60.3 L1008.2 55.8" fill="none" stroke="#555" stroke-width="1.9"/><path d="M1055.5 55.8 L1060 60.3 L1064.5 55.8" fill="none" stroke="#555" stroke-width="1.9"/><path d="M402 58 Q402 49 411 49 L419.5 49 L419.5 66.5 L405 66.5 L402 64 Z" fill="#fff" stroke="#222" stroke-width="1.1" stroke-linejoin="round"/><path d="M402.5 58 Q402.5 49.5 411 49.5 L413.5 52.5 Q406 52.5 405.5 60 Z" fill="#777"/><path d="M405.5 60 L405.5 66.5 M411 49.5 L413.5 52.5" stroke="#222" stroke-width="0.7"/><path d="M436.5 57 L444.5 49 L453.5 49 L453.5 66.5 L439.5 66.5 L436.5 64 Z" fill="#fff" stroke="#222" stroke-width="1.1" stroke-linejoin="round"/><path d="M437 57 L444.5 49.5 L447.5 52.5 L439.5 60 Z" fill="#777"/><path d="M439.5 60 L439.5 66.5" stroke="#222" stroke-width="0.7"/><path d="M470.5 63.5 L477.5 49 L487.5 49 L487.5 66.5 L473.5 66.5 Z" fill="#777" stroke="#222" stroke-width="1.1" stroke-linejoin="round"/><path d="M477.5 49 L480.5 52 L487.5 52 M480.5 52 L473.5 66.5" fill="none" stroke="#ddd" stroke-width="0.8"/><path d="M477.5 49 L487.5 49 L487.5 52 L480.5 52 Z" fill="#fff"/><path d="M504.5 62 L515.5 52 L515.5 49 L518.5 49 L521.5 52 L521.5 66.5 L507 66.5 L504.5 64 Z" fill="#fff" stroke="#222" stroke-width="1.1" stroke-linejoin="round"/><path d="M507.5 62.5 L515.5 55 L518 55 L518 63 L507.5 63 Z" fill="#777"/><path d="M515.5 52 L518.5 55 L518.5 66.5 M504.5 62 L507.5 63" fill="none" stroke="#222" stroke-width="0.7"/><path d="M538.5 52.2 L541.7 49 L555.5 49 L555.5 66.5 L541.7 66.5 L538.5 63.3 Z" fill="#fff" stroke="#222" stroke-width="1.1" stroke-linejoin="round"/><path d="M538.5 52.2 L541.7 52.2 L541.7 66.5" fill="none" stroke="#222" stroke-width="0.7"/><path d="M543.5 52.5 L551.5 52.5 L551.5 62.5 L543.5 62.5 Z" fill="#777" stroke="#222" stroke-width="0.7"/><path d="M543.5 52.5 L545.5 54 L545.5 62.5" fill="none" stroke="#fff" stroke-width="0.6"/><path d="M572.5 52.2 L575.7 49 L589.5 49 L589.5 66.5 L575.7 66.5 L572.5 63.3 Z" fill="#fff" stroke="#222" stroke-width="1.1" stroke-linejoin="round"/><path d="M572.5 52.2 L575.7 52.2 L575.7 66.5" fill="none" stroke="#222" stroke-width="0.7"/><circle cx="582.5" cy="58.5" r="5" fill="#6a6a6a" stroke="#222" stroke-width="0.9"/><circle cx="581.3" cy="57.2" r="2" fill="#aaa"/><path d="M610.5 51.3 L612.3 49.5 L619.0 49.5 L619.0 58.0 L612.3 58.0 L610.5 56.2 Z" fill="#fff" stroke="#222" stroke-width="1"/><path d="M610.5 51.3 L612.3 51.3 L612.3 58.0" fill="none" stroke="#222" stroke-width="0.6"/><path d="M619 51.3 L620.8 49.5 L627.5 49.5 L627.5 58.0 L620.8 58.0 L619 56.2 Z" fill="#888" stroke="#222" stroke-width="1"/><path d="M619 51.3 L620.8 51.3 L620.8 58.0" fill="none" stroke="#222" stroke-width="0.6"/><path d="M610.5 59.8 L612.3 58 L619.0 58 L619.0 66.5 L612.3 66.5 L610.5 64.7 Z" fill="#888" stroke="#222" stroke-width="1"/><path d="M610.5 59.8 L612.3 59.8 L612.3 66.5" fill="none" stroke="#222" stroke-width="0.6"/><path d="M619 59.8 L620.8 58 L627.5 58 L627.5 66.5 L620.8 66.5 L619 64.7 Z" fill="#888" stroke="#222" stroke-width="1"/><path d="M619 59.8 L620.8 59.8 L620.8 66.5" fill="none" stroke="#222" stroke-width="0.6"/><path d="M661.5 52 L664 49.5 L667 49.5 L667 57 L670 60 L670 66.5 L664 66.5 L661.5 64 Z" fill="#fff" stroke="#222" stroke-width="1.1" stroke-linejoin="round"/><path d="M661.5 52 L664 52 L664 66.5 M664 52 L667 49.5" fill="none" stroke="#222" stroke-width="0.6"/><path d="M671.5 60 L674.5 57 L674.5 52 L677 49.5 L680 49.5 L680 66.5 L671.5 66.5 Z" fill="#888" stroke="#222" stroke-width="1.1" stroke-linejoin="round"/><path d="M674.5 52 L677 52 L677 66.5" fill="none" stroke="#222" stroke-width="0.6"/><circle cx="705" cy="58" r="6.5" fill="#fff" stroke="#222" stroke-width="1.1"/><circle cx="713" cy="58" r="6.5" fill="none" stroke="#222" stroke-width="1.1"/><path d="M709 52.8 A6.5 6.5 0 0 1 709 63.2 A6.5 6.5 0 0 1 709 52.8" fill="#8a8a8a"/><path d="M734 52.5 L737 49.5 L752 49.5 L752 66.5 L737 66.5 L734 63.5 Z" fill="#fff" stroke="#222" stroke-width="1.1" stroke-linejoin="round"/><path d="M734 52.5 L737 52.5 L737 66.5" fill="none" stroke="#222" stroke-width="0.7"/><path d="M734 61 Q739 58.5 743 60 Q748 62 752 59" fill="none" stroke="#222" stroke-width="0.9"/><path d="M768 59.5 L770 57.5 L777 57.5 L777 66.5 L770 66.5 L768 64.5 Z" fill="#fff" stroke="#222" stroke-width="1.1" stroke-linejoin="round"/><path d="M768 59.5 L770 59.5 L770 66.5" fill="none" stroke="#222" stroke-width="0.7"/><path d="M782 49.5 L786.5 54.5 L782 59.5 L777.5 54.5 Z" fill="#888" stroke="#222" stroke-width="0.9"/><path d="M771.5 55 Q771.5 50.5 775.5 50" fill="none" stroke="#222" stroke-width="1.1"/><path d="M774.5 48.5 L777 50 L774.5 52 Z" fill="#222"/><path d="M785.5 60 Q785.5 65 781 66" fill="none" stroke="#222" stroke-width="1.1"/><path d="M782.5 64 L780 66.5 L783 67.5 Z" fill="#222"/><path d="M820.5 51.5 L822.5 49.5 L836 49.5 L836 64 L822.5 64 L820.5 62 Z" fill="#999" stroke="#777" stroke-width="1"/><path d="M820.5 51.5 L836 51.5" stroke="#ccc" stroke-width="0.8"/><circle cx="834" cy="63.5" r="4.8" fill="#222" stroke="#fff" stroke-width="0.8"/><path d="M832 61.5 L836 65.5 M836 61.5 L832 65.5" stroke="#fff" stroke-width="1.2"/><path d="M857 63 Q856.5 52 866 48.5 Q869 48 871 49 L869.5 55 Q864 56.5 863 62.5 Z" fill="#8a8a8a"/><path d="M865 62 Q867 56 871 57.5 L873.5 55 L877 60 L872 61 Q869.5 61.5 868.5 66.5 Z" fill="#fff" stroke="#222" stroke-width="1" stroke-linejoin="round"/><path d="M866 53 L868.5 57.5 M865.5 56.5 L866 53 L869.5 53.5" fill="none" stroke="#222" stroke-width="1.4"/><path d="M915 49 L932 52.5 L932 66.5 L915 63 Z" fill="#c8c8c8" stroke="#222" stroke-width="1.1" stroke-linejoin="round"/><path d="M923 50.8 L923 59 L932 60" fill="none" stroke="#222" stroke-width="0.9"/><path d="M923.5 51.5 L931.5 53 L931.5 59.5 L923.5 58.5 Z" fill="#ddd"/><path d="M970 52 L973 49.5 L976 49.5 L976 61 L981 63 L981 51.5 L984 49.5 L987 52 L987 66.5 L973 66.5 L970 64 Z" fill="#fff" stroke="#222" stroke-width="1.1" stroke-linejoin="round"/><path d="M970 52 L973 52 L973 66.5 M976 61 L973 63.5 M981 63 L987 66.5" fill="none" stroke="#222" stroke-width="0.8"/><path d="M976.5 61.5 L981 63.5 L986 66 L974 66 Z" fill="#999"/><rect x="1025.5" y="49" width="19" height="18" rx="2" fill="none" stroke="#222" stroke-width="1.5" stroke-dasharray="3.2 2.6"/><path d="M1035 54 V62.5 M1030.8 58.2 H1039.2" stroke="#222" stroke-width="2"/><circle cx="14" cy="51.5" r="3" fill="none" stroke="#222" stroke-width="1.5"/><path d="M14 54.5 V64 M14 62 Q14 58 20 57" fill="none" stroke="#222" stroke-width="1.5"/><circle cx="14" cy="64" r="1.8" fill="#222"/><circle cx="20.5" cy="57" r="1.8" fill="#222"/><path d="M21 50.5 H30 M23 54.5 H30 M23 58.5 H30 M21 63.5 H30" stroke="#222" stroke-width="1.6"/><path d="M15.5 83 V87 M15.5 96 V101" stroke="#222" stroke-width="2" stroke-dasharray="1.7 1.3"/><circle cx="15.5" cy="91.5" r="3" fill="#222"/><path d="M20 97 H28 M24 93 V101" stroke="#1f4aa0" stroke-width="1.8"/><ellipse cx="20" cy="124.5" rx="9.5" ry="6" fill="#222"/><path d="M15 128 L13 134 L20 129 Z" fill="#222"/><circle cx="21" cy="162.5" r="6" fill="none" stroke="#222" stroke-width="1.6"/><path d="M21 162.5 L23 159 M19 155 H23 M12 159.5 H16 M11 162.5 H15 M12 165.5 H16" stroke="#222" stroke-width="1.3"/><rect x="11" y="587" width="18" height="7" fill="#222"/><circle cx="21" cy="595" r="5" fill="#f7f7f7" stroke="#222" stroke-width="1.6"/><path d="M24 598.5 L28 602" stroke="#222" stroke-width="1.8"/><path d="M177 88 L182 88 L184 90 L193 90 L193 100 L177 100 Z" fill="none" stroke="#888" stroke-width="1"/><path d="M181 92 V99 M177.5 95.5 H184.5" stroke="#5a8ab0" stroke-width="1.6"/><circle cx="215" cy="95.5" r="7" fill="none" stroke="#222" stroke-width="1.8"/><path d="M212 86.5 H218 M215 86.5 V88.5 M220.5 88 L222 89.5 M215 95.5 L213 92.5" stroke="#222" stroke-width="1.5"/><path d="M51 117 H65.5 L60 124 L60 131.5 L56.5 129 L56.5 124 Z" fill="none" stroke="#333" stroke-width="1.1" stroke-linejoin="round"/><path d="M44.5 149.5 L50.0 155.0 L55.5 149.5" fill="none" stroke="#444" stroke-width="1.8"/><path d="M44.5 413 L50.0 418.5 L55.5 413" fill="none" stroke="#444" stroke-width="1.8"/><circle cx="72.5" cy="178.5" r="3" fill="none" stroke="#bbb" stroke-width="1"/><circle cx="72.5" cy="178.5" r="1.1" fill="#bbb"/><path d="M66 198 L79 200 L79 211 L66 209 Z" fill="#e6e6e6" stroke="#a8a8a8" stroke-width="1.1"/><path d="M72.5 199 V205 L79 206" fill="none" stroke="#a8a8a8" stroke-width="1.1"/><path d="M73 199.5 L78.5 200.5 L78.5 205.5 L73 204.7 Z" fill="#f6f6f6"/><path d="M66 224 L79 226 L79 237 L66 235 Z" fill="#e6e6e6" stroke="#a8a8a8" stroke-width="1.1"/><path d="M72.5 225 V231 L79 232" fill="none" stroke="#a8a8a8" stroke-width="1.1"/><path d="M73 225.5 L78.5 226.5 L78.5 231.5 L73 230.7 Z" fill="#f6f6f6"/><path d="M66 250 L79 252 L79 263 L66 261 Z" fill="#e6e6e6" stroke="#a8a8a8" stroke-width="1.1"/><path d="M72.5 251 V257 L79 258" fill="none" stroke="#a8a8a8" stroke-width="1.1"/><path d="M73 251.5 L78.5 252.5 L78.5 257.5 L73 256.7 Z" fill="#f6f6f6"/><path d="M49 283 L52 280.5 L55 280.5 L55 276.5 L58 274 L61 277 L61 288.5 L49 288.5 L46.5 286 L46.5 283 Z" fill="#fff" stroke="#333" stroke-width="1.1" stroke-linejoin="round"/><path d="M46.5 283 L58.5 283 L58.5 288.5 M58.5 283 L58.5 276.5 L61 277" fill="none" stroke="#333" stroke-width="0.8"/><path d="M47.5 274.5 L53 279 M53 276 L53 279.5 L49.5 279.5" fill="none" stroke="#333" stroke-width="1.5"/><path d="M47 303 L49.5 300.5 L57 300.5 L60 303.5 L60 314 L49.5 314 L47 311.5 Z" fill="#e8eef2" stroke="#444" stroke-width="1.1" stroke-linejoin="round"/><path d="M49.5 300.5 L49.5 311 L57.5 311 L57.5 314 M47 303 L49.5 303" fill="none" stroke="#444" stroke-width="1"/><path d="M52 301 L52 308.5 L57.5 308.5 L57.5 303.5" fill="none" stroke="#444" stroke-width="1.2"/><path d="M419.5 92.5 L425 98.5 L434 88" fill="none" stroke="#e6ffe0" stroke-width="3"/><path d="M450 88 L460 98 M460 88 L450 98" stroke="#c24b35" stroke-width="2.8"/><path d="M253.5 146 L259.0 151.5 L264.5 146" fill="none" stroke="#555" stroke-width="2"/><path d="M447 195 L453.5 201.5 M453.5 195 L447 201.5" stroke="#aaa" stroke-width="1.2"/><path d="M275.5 229 L278.5 232 L283 226" fill="none" stroke="#fff" stroke-width="1.8"/><path d="M256 340.5 L261 345.5 L256 350.5" fill="none" stroke="#555" stroke-width="2"/><path d="M256 367.5 L261 372.5 L256 377.5" fill="none" stroke="#555" stroke-width="2"/><path d="M256 394.5 L261 399.5 L256 404.5" fill="none" stroke="#555" stroke-width="2"/><circle cx="333" cy="426" r="5.5" fill="#fff" stroke="#555" stroke-width="1.3"/><circle cx="457.7" cy="424.8" r="6.3" fill="#999"/><text x="454.3" y="429" font-family="Liberation Sans" font-weight="bold" font-size="10" fill="#fff">?</text><path d="M1125 120.5 L1133 120.5 L1129 126 Z" fill="#555"/><path d="M917 159.5 L921.5 164 L926 159.5" fill="none" stroke="#555" stroke-width="1.4"/><path d="M48.5 593 H63.5 M56 585.5 V600.5" stroke="#505050" stroke-width="2.6"/><path d="M0 602 L0 609 L6 609 Z" fill="#222"/><path d="M91 589 L95 587 L99 588 L99 600 L91 600 Z M99 585 L103 583 L107 584 L107 600 L99 600" fill="#fff" stroke="#333" stroke-width="1.1"/><path d="M95 587 V600 M103 583 V600" stroke="#333" stroke-width="0.8"/><path d="M292 586 L298 586 L300 588 L309 588 L309 599 L292 599 Z" fill="#fff" stroke="#444" stroke-width="1.1"/><path d="M1280 601 L1280 609 L1272 609 Z" fill="#222"/></svg>
</body></html>
